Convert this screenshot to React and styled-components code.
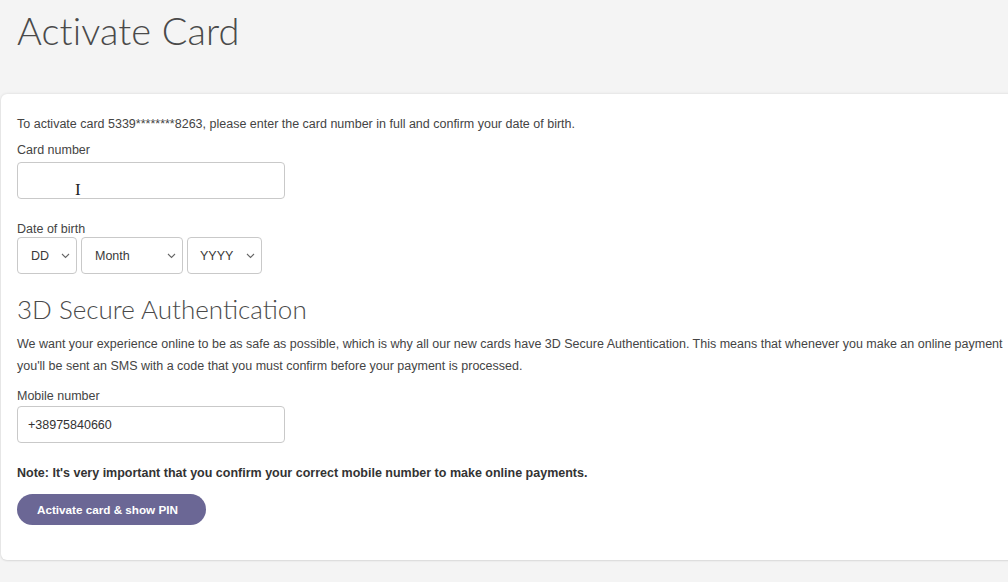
import styled, { createGlobalStyle } from "styled-components";

const Global = createGlobalStyle`
  html, body {
    margin: 0;
    background: #f4f4f4;
    overflow: hidden;
  }
  body {
    font-family: "Liberation Sans", Arial, sans-serif;
    color: #3a3a3a;
  }
`;

const Page = styled.div`
  width: 1008px;
  height: 582px;
  background: #f4f4f4;
  display: flex;
  flex-direction: column;
`;

const PageTitle = styled.h1`
  margin: 0;
  padding: 7px 0 0 17px;
  height: 94px;
  box-sizing: border-box;
  font-family: Lato, "Open Sans", sans-serif;
  font-weight: 300;
  font-size: 38px;
  line-height: 46px;
  color: #4a4a4a;
  letter-spacing: 0.1px;
`;

const Card = styled.section`
  margin-left: 1px;
  width: 1030px;
  height: 466px;
  box-sizing: border-box;
  background: #fff;
  border-radius: 6px;
  box-shadow: 0 0 3px rgba(0, 0, 0, 0.12), 0 1px 2px rgba(0, 0, 0, 0.06);
  padding: 19px 16px 0;
  display: flex;
  flex-direction: column;
  align-items: flex-start;
`;

const Text = styled.p`
  margin: 0;
  font-size: 12.5px;
  line-height: 22px;
  color: #444;
  max-width: ${(p) => p.max || "none"};
`;

const Label = styled.label`
  display: block;
  font-size: 12.5px;
  line-height: 14px;
  color: #444;
  margin: ${(p) => p.mt || "0"} 0 ${(p) => p.mb || "5px"};
`;

const Input = styled.input`
  width: 268px;
  height: 37px;
  box-sizing: border-box;
  border: 1.5px solid #c9c9c9;
  border-radius: 4px;
  padding: 0 10px;
  font-family: "Liberation Sans", Arial, sans-serif;
  font-size: 12.5px;
  color: #333;
  outline: none;
  background: #fff;
`;

const Field = styled.div`
  position: relative;
`;

const Cursor = styled.span`
  position: absolute;
  left: 58px;
  top: 20px;
  font-family: "Liberation Serif", serif;
  font-size: 17px;
  line-height: 15px;
  color: #222;
`;

const Row = styled.div`
  display: flex;
  gap: 4px;
`;

const Select = styled.div`
  width: ${(p) => p.w}px;
  height: 37px;
  box-sizing: border-box;
  border: 1.5px solid #c9c9c9;
  border-radius: 4px;
  display: flex;
  align-items: center;
  justify-content: space-between;
  padding: 0 6px 0 ${(p) => p.pl || 13}px;
  font-size: 12.5px;
  color: #3a3a3a;
  background: #fff;
`;

const Heading = styled.h2`
  margin: 19px 0 8px;
  font-family: Lato, "Open Sans", sans-serif;
  font-weight: 300;
  font-size: 26px;
  line-height: 32px;
  color: #4a4a4a;
`;

const Note = styled.p`
  margin: 23px 0 0;
  font-size: 12.5px;
  font-weight: bold;
  line-height: 14px;
  color: #333;
`;

const Button = styled.button`
  margin-top: 14px;
  height: 31px;
  padding: 0 28px 0 20px;
  border: none;
  border-radius: 16px;
  background: #6b6795;
  color: #fff;
  font-family: "Liberation Sans", Arial, sans-serif;
  font-weight: bold;
  font-size: 11.7px;
  cursor: pointer;
`;

const Chevron = () => (
  <svg width="9" height="6" viewBox="0 0 9 6" fill="none">
    <path d="M1 1l3.5 3.5L8 1" stroke="#666" strokeWidth="1.1" />
  </svg>
);

export default function App() {
  return (
    <Page>
      <Global />
      <PageTitle>Activate Card</PageTitle>
      <Card>
        <Text>
          To activate card 5339********8263, please enter the card number in full and confirm your date of birth.
        </Text>
        <Label mt="8px">Card number</Label>
        <Field>
          <Input />
          <Cursor>I</Cursor>
        </Field>
        <Label mt="23px" mb="1px">Date of birth</Label>
        <Row>
          <Select w={60}>
            DD <Chevron />
          </Select>
          <Select w={102} pl={13}>
            Month <Chevron />
          </Select>
          <Select w={75} pl={12}>
            YYYY <Chevron />
          </Select>
        </Row>
        <Heading>3D Secure Authentication</Heading>
        <Text max="1000px">
          We want your experience online to be as safe as possible, which is why all our new cards have 3D Secure Authentication. This means that whenever you make an online payment you'll be sent an SMS with a code that you must confirm before your payment is processed.
        </Text>
        <Label mt="12px" mb="3px">Mobile number</Label>
        <Input defaultValue="+38975840660" />
        <Note>
          Note: It's very important that you confirm your correct mobile number to make online payments.
        </Note>
        <Button>Activate card &amp; show PIN</Button>
      </Card>
    </Page>
  );
}
